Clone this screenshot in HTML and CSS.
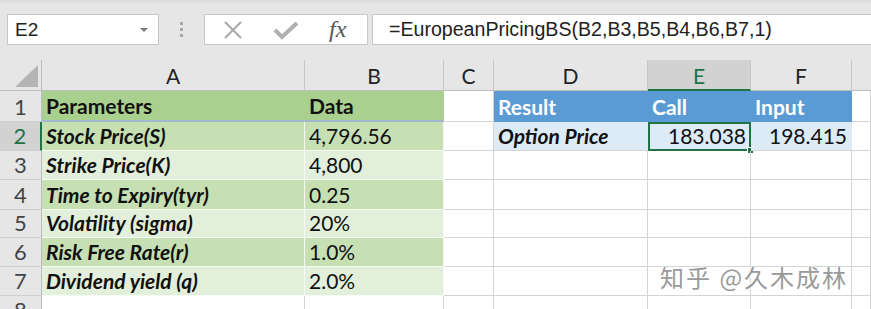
FILE: index.html
```html
<!DOCTYPE html>
<html>
    <head>
        <meta charset="utf-8">
        <title>EuropeanPricingBS</title>
        <link rel="stylesheet" href="styles.css">
    </head>
    <body>
        <div class="toolbar">
            <div class="namebox">
                <span>E2</span>
                <span class="caret"></span>
            </div>
            <div class="grip"><i></i><i></i><i></i></div>
            <div class="buttons">
                <svg class="btn" width="24" height="24" viewBox="0 0 24 24"><path d="M4 4 L20 20 M20 4 L4 20" stroke="#a8a8a8" stroke-width="2" fill="none"/></svg>
                <svg class="btn" width="28" height="24" viewBox="0 0 28 24"><path d="M3 12 L10 19 L25 5" stroke="#b0b0b0" stroke-width="4" fill="none"/></svg>
                <span class="fx">fx</span>
            </div>
            <div class="formula">=EuropeanPricingBS(B2,B3,B5,B4,B6,B7,1)</div>
        </div>

        <div class="sheet">
            <div class="corner"><span class="tri"></span></div>
            <div class="colhead">A</div>
            <div class="colhead">B</div>
            <div class="colhead">C</div>
            <div class="colhead">D</div>
            <div class="colhead active">E</div>
            <div class="colhead">F</div>
            <div class="colhead last"></div>

            <div class="rowhead">1</div>
            <div class="cell t-head b">Parameters</div>
            <div class="cell t-head b">Data</div>
            <div class="cell"></div>
            <div class="cell r-head b">Result</div>
            <div class="cell r-head b">Call</div>
            <div class="cell r-head b">Input</div>
            <div class="cell"></div>

            <div class="rowhead active">2</div>
            <div class="cell t-dark bi">Stock Price(S)</div>
            <div class="cell t-dark">4,796.56</div>
            <div class="cell"></div>
            <div class="cell r-row bi">Option Price</div>
            <div class="cell r-row num selected">183.038<span class="handle"></span></div>
            <div class="cell r-row num">198.415</div>
            <div class="cell"></div>

            <div class="rowhead">3</div>
            <div class="cell t-light bi">Strike Price(K)</div>
            <div class="cell t-light">4,800</div>
            <div class="cell"></div>
            <div class="cell"></div>
            <div class="cell"></div>
            <div class="cell"></div>
            <div class="cell"></div>

            <div class="rowhead">4</div>
            <div class="cell t-dark bi">Time to Expiry(tyr)</div>
            <div class="cell t-dark">0.25</div>
            <div class="cell"></div>
            <div class="cell"></div>
            <div class="cell"></div>
            <div class="cell"></div>
            <div class="cell"></div>

            <div class="rowhead">5</div>
            <div class="cell t-light bi">Volatility (sigma)</div>
            <div class="cell t-light">20%</div>
            <div class="cell"></div>
            <div class="cell"></div>
            <div class="cell"></div>
            <div class="cell"></div>
            <div class="cell"></div>

            <div class="rowhead">6</div>
            <div class="cell t-dark bi">Risk Free Rate(r)</div>
            <div class="cell t-dark">1.0%</div>
            <div class="cell"></div>
            <div class="cell"></div>
            <div class="cell"></div>
            <div class="cell"></div>
            <div class="cell"></div>

            <div class="rowhead">7</div>
            <div class="cell t-light bi">Dividend yield (q)</div>
            <div class="cell t-light">2.0%</div>
            <div class="cell"></div>
            <div class="cell"></div>
            <div class="cell"></div>
            <div class="cell"></div>
            <div class="cell"></div>

            <div class="rowhead">8</div>
            <div class="cell"></div>
            <div class="cell"></div>
            <div class="cell"></div>
            <div class="cell"></div>
            <div class="cell"></div>
            <div class="cell"></div>
            <div class="cell"></div>

            <div class="watermark">知乎 @久木成林</div>
        </div>
    </body>
</html>
```

FILE: styles.css
```css
*{
    box-sizing: border-box;
}
body{
    margin: 0;
    width: 871px;
    height: 309px;
    overflow: hidden;
    background-color: #e6e6e6;
    font-family: Lato, "Open Sans", sans-serif;
}
.toolbar{
    height: 60px;
    display: flex;
    align-items: flex-start;
    padding: 14px 0 0 7px;
    background: linear-gradient(#d8d8d8 0, #e6e6e6 4px);
}
.namebox{
    width: 152px;
    height: 31px;
    background-color: white;
    border: 1px solid #c8c8c8;
    display: flex;
    align-items: center;
    justify-content: space-between;
    padding: 0 10px 0 7px;
    font-family: "Liberation Sans", Arial, sans-serif;
    font-size: 19px;
    color: #222;
}
.caret{
    width: 0;
    height: 0;
    border-left: 4px solid transparent;
    border-right: 4px solid transparent;
    border-top: 4px solid #777;
}
.grip{
    width: 45px;
    height: 31px;
    display: flex;
    flex-direction: column;
    align-items: center;
    justify-content: center;
    gap: 3px;
}
.grip i{
    width: 3px;
    height: 3px;
    background-color: #a8a8a8;
}
.buttons{
    width: 164px;
    height: 31px;
    background-color: white;
    border: 1px solid #c8c8c8;
    display: flex;
    align-items: center;
    padding-left: 16px;
    gap: 27px;
}
.fx{
    font-family: "Liberation Serif", serif;
    font-style: italic;
    font-size: 24px;
    color: #555;
    margin-left: 2px;
}
.formula{
    flex: 1;
    margin-left: 4px;
    height: 31px;
    background-color: white;
    border: 1px solid #c8c8c8;
    border-right: none;
    padding: 3px 0 0 16px;
    font-family: "Liberation Sans", Arial, sans-serif;
    font-size: 19.6px;
    color: #222;
}
.sheet{
    position: relative;
    display: grid;
    grid-template-columns: 42px 263px 139px 50px 154px 103px 101px 19px;
    grid-template-rows: 31px 31px 29px 29px 30px 28px 29px 29px 29px;
    background-color: white;
}
.corner{
    background-color: #e6e6e6;
    border-right: 1px solid #bdbdbd;
    border-bottom: 1px solid #bdbdbd;
    position: relative;
}
.tri{
    position: absolute;
    right: 3px;
    bottom: 3px;
    width: 0;
    height: 0;
    border-left: 23px solid transparent;
    border-bottom: 22px solid #b4b4b4;
}
.colhead{
    background-color: #e6e6e6;
    border-right: 1px solid #c6c6c6;
    border-bottom: 1px solid #bdbdbd;
    display: flex;
    justify-content: center;
    align-items: flex-end;
    padding-bottom: 2px;
    font-size: 21px;
    color: #222;
}
.colhead.active{
    background-color: #d2d2d2;
    color: #217346;
    border-bottom: 2px solid #217346;
    padding-bottom: 1px;
}
.colhead.last{
    border-right: none;
}
.rowhead{
    background-color: #e6e6e6;
    border-right: 1px solid #bdbdbd;
    border-bottom: 1px solid #cfcfcf;
    display: flex;
    justify-content: center;
    align-items: flex-end;
    padding-bottom: 1px;
    font-size: 22px;
    color: #444;
}
.rowhead.active{
    background-color: #d2d2d2;
    color: #217346;
    border-right: 2px solid #217346;
}
.cell{
    border-right: 1px solid #d4d4d4;
    border-bottom: 1px solid #d4d4d4;
    display: flex;
    align-items: flex-end;
    padding: 0 4px 2px 4px;
    font-size: 21px;
    color: #111;
    white-space: nowrap;
    position: relative;
}
.b{
    font-weight: bold;
}
.bi{
    font-weight: bold;
    font-style: italic;
}
.num{
    justify-content: flex-end;
}
.t-head{
    background-color: #a9d08e;
    border-right-color: #a9d08e;
    border-bottom: 2px solid #a3b8cf;
}
.t-dark{
    background-color: #c6e0b4;
    border-right-color: #f4f9f1;
    border-bottom-color: #f4f9f1;
}
.t-light{
    background-color: #e2efda;
    border-right-color: #f7fbf5;
    border-bottom-color: #f7fbf5;
}
.r-head{
    background-color: #5b9bd5;
    border-right-color: #5b9bd5;
    border-bottom-color: #5b9bd5;
    color: white;
}
.r-row{
    background-color: #ddebf7;
    border-right-color: #ddebf7;
}
.selected{
    border: 2px solid #217346;
    padding-right: 3px;
    padding-bottom: 1px;
}
.handle{
    position: absolute;
    right: -5px;
    bottom: -5px;
    width: 7px;
    height: 7px;
    background-color: #217346;
    border: 1px solid white;
}
.watermark{
    position: absolute;
    left: 660px;
    top: 199px;
    font-family: "Noto Sans CJK SC", sans-serif;
    font-size: 24px;
    color: #9a9a9a;
    letter-spacing: 2px;
    text-shadow: 1px 1px 0 white, -1px -1px 0 white;
}
```
